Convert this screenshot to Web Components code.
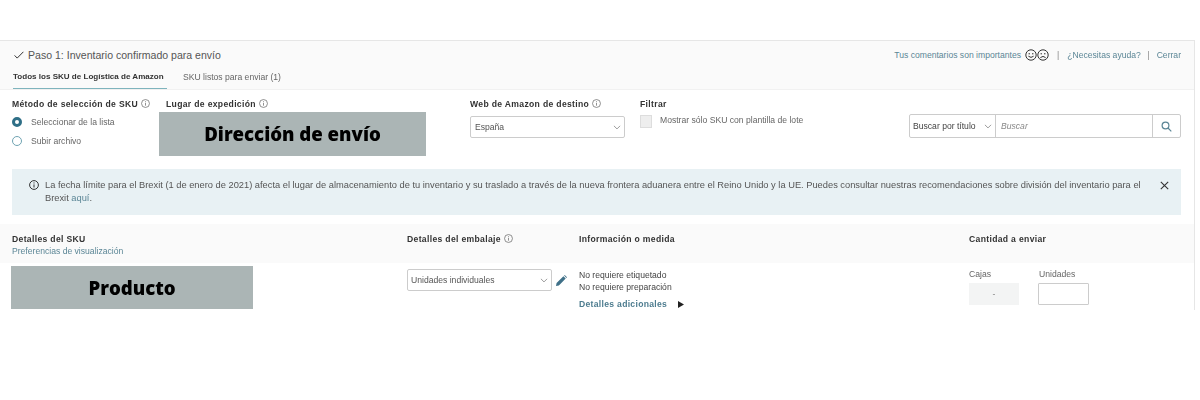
<!DOCTYPE html>
<html lang="es"><head><meta charset="utf-8"><title>Paso 1</title>
<style>
html,body{margin:0;background:#fff}
body{font-family:"Liberation Sans",Arial,sans-serif;color:#444;padding-top:40px;height:360px;overflow:hidden}
</style></head><body>
<send-panel>
  <panel-header></panel-header>
  <filter-bar></filter-bar>
  <info-alert><span>La fecha límite para el Brexit (1 de enero de 2021) afecta el lugar de almacenamiento de tu inventario y su traslado a través de la nueva frontera aduanera entre el Reino Unido y la UE. Puedes consultar nuestras recomendaciones sobre división del inventario para el</span><span>Brexit <a style="color:#5b8696">aquí</a>.</span></info-alert>
  <sku-table></sku-table>
</send-panel>
<script>
const INFO='<svg width="9" height="9" viewBox="0 0 10 10" fill="none" stroke="#666" stroke-width=".8" style="vertical-align:-1px;margin-left:3px"><circle cx="5" cy="5" r="4.4"/><path d="M5 4.3V7.4M5 2.5v1"/></svg>';
const CHEV='<svg width="8" height="5" viewBox="0 0 9 6" fill="none" stroke="#888" stroke-width="1"><path d="M.8 1l3.7 3.7L8.2 1"/></svg>';
function def(name,css,html){
  customElements.define(name,class extends HTMLElement{
    constructor(){super();this.attachShadow({mode:'open'}).innerHTML='<style>'+css+'</style>'+html;}
  });
}
def('send-panel',`:host{display:block;width:1194px;height:269px;border-top:1px solid #e6e6e6;border-right:1px solid #e6e6e6;box-sizing:content-box;filter:blur(.35px)}`,`<slot></slot>`);

def('panel-header',`:host{display:block;height:49px;background:#fafafa;box-sizing:border-box;border-bottom:1px solid #f1f1f1}
.top{display:flex;justify-content:space-between;align-items:center;height:28px;padding:0 13px 0 14px}
.step{display:flex;align-items:center;gap:4px;font-size:10.55px;color:#555}
.links{display:flex;align-items:center;font-size:8.6px;color:#5b8696}
.links i{font-style:normal;color:#888;margin:0 8px}
.links i.n{margin:0 6.8px}
.faces{display:flex;gap:0;margin-left:4px}
.tabs{display:flex;padding-left:13px;font-size:8.6px;height:20px}
.tab{height:20px;box-sizing:border-box;padding-top:2px;line-height:12px;white-space:nowrap}
.on{width:154px;color:#333;font-weight:700;font-size:8.05px;border-bottom:1px solid #7fb4bd}
.off{margin-left:16px;color:#666}`,
`<div class="top"><div class="step"><svg width="10" height="8" viewBox="0 0 10 8" fill="none" stroke="#333" stroke-width="1"><path d="M.6 4.4l2.6 2.7L9.4.8"/></svg><span>Paso 1: Inventario confirmado para envío</span></div>
<div class="links"><span>Tus comentarios son importantes</span><span class="faces">
<svg width="12" height="12" viewBox="0 0 12 12" fill="none" stroke="#333" stroke-width="1"><circle cx="6" cy="6" r="5.2"/><circle cx="4.2" cy="4.8" r=".7" fill="#333" stroke="none"/><circle cx="7.8" cy="4.8" r=".7" fill="#333" stroke="none"/><path d="M3.4 7.2q2.6 2.4 5.2 0"/></svg>
<svg width="12" height="12" viewBox="0 0 12 12" fill="none" stroke="#333" stroke-width="1"><circle cx="6" cy="6" r="5.2"/><circle cx="4.2" cy="4.8" r=".7" fill="#333" stroke="none"/><circle cx="7.8" cy="4.8" r=".7" fill="#333" stroke="none"/><path d="M3.4 8.6q2.6-2.4 5.2 0"/></svg>
</span><i>|</i><span>¿Necesitas ayuda?</span><i class="n">|</i><span>Cerrar</span></div></div>
<div class="tabs"><div class="tab on">Todos los SKU de Logística de Amazon</div><div class="tab off">SKU listos para enviar (1)</div></div>`);

def('filter-bar',`:host{display:grid;grid-template-columns:154px 304px 170px 269px 272px;padding:8px 0 0 12px;height:79px;box-sizing:border-box;font-size:8.6px;color:#555}
b{display:block;font-weight:700;color:#333;line-height:12px;white-space:nowrap;letter-spacing:.33px}
.radio{display:flex;align-items:center;gap:9px;line-height:12px;color:#666}
.radio span{width:10px;height:10px;border-radius:50%;box-sizing:border-box;border:1px solid #6fa3b2;background:#fff}
.radio .sel{border:3px solid #2f6f87}
.r1{margin-top:6px;margin-bottom:7px}
.gray{margin:2px 0 0 -7px;width:267px;height:44px;background:#abb5b5;color:#000;font:800 18.6px/44px "Open Sans",sans-serif;text-align:center}
.select{width:155px;height:22px;margin-top:6px;border:1px solid #ccc;border-radius:2px;box-sizing:border-box;display:flex;align-items:center;justify-content:space-between;padding:0 3px 0 4px;background:#fff}
.check{display:flex;gap:8px;margin-top:5px;color:#666;line-height:11px}
.check span{width:12px;height:13px;background:#eee;border:1px solid #ddd;box-sizing:border-box}
.search{display:flex;width:272px;height:24px;margin-top:16px;border:1px solid #ccc;border-radius:2px;box-sizing:border-box;background:#fff}
.search div{display:flex;align-items:center}
.by{width:86px;padding:0 3px;box-sizing:border-box;justify-content:space-between;border-right:1px solid #ccc;color:#444}
.q{flex:1;padding-left:5px;font-style:italic;color:#888}
.go{width:27px;justify-content:center;border-left:1px solid #ccc}`,
`<div><b>Método de selección de SKU${INFO}</b>
<div class="radio r1"><span class="sel"></span>Seleccionar de la lista</div><div class="radio"><span></span>Subir archivo</div></div>
<div><b>Lugar de expedición${INFO}</b><div class="gray">Dirección de envío</div></div>
<div><b>Web de Amazon de destino${INFO}</b><div class="select">España${CHEV}</div></div>
<div><b>Filtrar</b><div class="check"><span></span>Mostrar sólo SKU con plantilla de lote</div></div>
<div class="search"><div class="by">Buscar por título${CHEV}</div><div class="q">Buscar</div><div class="go"><svg width="11" height="11" viewBox="0 0 11 11" fill="none" stroke="#5b8696" stroke-width="1.2"><circle cx="4.5" cy="4.5" r="3.4"/><path d="M7 7l3.3 3.3"/></svg></div></div>`);

def('info-alert',`:host{display:flex;width:1169px;height:46px;margin-left:12px;background:#e8f1f4;box-sizing:border-box;padding:10px 12px 0 17px;font-size:9.3px;line-height:13px;color:#555}
svg.i{flex:none;margin:1px 6px 0 0}
.t{flex:1}
::slotted(span){display:block}
.x{flex:none;margin:2px 0 0 18px}`,
`<svg class="i" width="10" height="10" viewBox="0 0 10 10" fill="none" stroke="#333" stroke-width="1"><circle cx="5" cy="5" r="4.4"/><path d="M5 4.4V7.5M5 2.4v1.1"/></svg><div class="t"><slot></slot></div><svg class="x" width="9" height="9" viewBox="0 0 9 9" fill="none" stroke="#333" stroke-width="1.1"><path d="M.8.8l7.4 7.4M8.2.8L.8 8.2"/></svg>`);

def('sku-table',`:host{display:block;margin-top:9px;font-size:8.6px;color:#555}
.grid{display:grid;grid-template-columns:395px 172px 390px 1fr;padding-left:12px}
.head{background:#fafafa;height:39px;box-sizing:border-box;padding-top:10px}
b{display:block;font-weight:700;color:#333;line-height:10px;letter-spacing:.33px}
.head a{display:block;color:#5b8696;line-height:12px;margin-top:1px}
.gray{margin:3px 0 0 -1px;width:242px;height:43px;background:#abb5b5;color:#000;font:800 18.6px/43px "Open Sans",sans-serif;text-align:center}
.row{height:47px}
.pack{display:flex;align-items:center;gap:4px;margin-top:6px;height:22px}
.select{width:145px;height:22px;border:1px solid #ccc;border-radius:2px;box-sizing:border-box;display:flex;align-items:center;justify-content:space-between;padding:0 3px;background:#fff}
.info{padding-top:6px;line-height:12px;color:#444}
.more{display:flex;align-items:center;gap:11px;color:#4d7c8f;font-weight:700;margin-top:5px;letter-spacing:.3px}
.qty{display:flex;gap:20px;padding-top:6px;line-height:11px;color:#666}
.cell{width:50px}
.dash{height:22px;margin-top:3px;background:#f3f4f4;text-align:center;line-height:22px;color:#888}
.in{height:22px;margin-top:3px;margin-left:-1px;border:1px solid #ccc;border-radius:1px;box-sizing:border-box;background:#fff}`,
`<div class="grid head"><div><b>Detalles del SKU</b><a>Preferencias de visualización</a></div><div><b>Detalles del embalaje${INFO}</b></div><div><b>Información o medida</b></div><div><b>Cantidad a enviar</b></div></div>
<div class="grid row"><div><div class="gray">Producto</div></div>
<div class="pack"><div class="select">Unidades individuales${CHEV}</div><svg width="11" height="11" viewBox="0 0 11 11" fill="#3f7088"><path d="M0 11l.6-2.9L7.4 1.3l2.3 2.3-6.8 6.8zM8.1.6l.6-.6 2.3 2.3-.6.6z"/></svg></div>
<div class="info">No requiere etiquetado<br>No requiere preparación<div class="more">Detalles adicionales<svg width="6" height="7" viewBox="0 0 6 7" fill="#222"><path d="M0 0l6 3.5L0 7z"/></svg></div></div>
<div class="qty"><div class="cell">Cajas<div class="dash">-</div></div><div class="cell">Unidades<div class="in"></div></div></div></div>`);
</script></body></html>
